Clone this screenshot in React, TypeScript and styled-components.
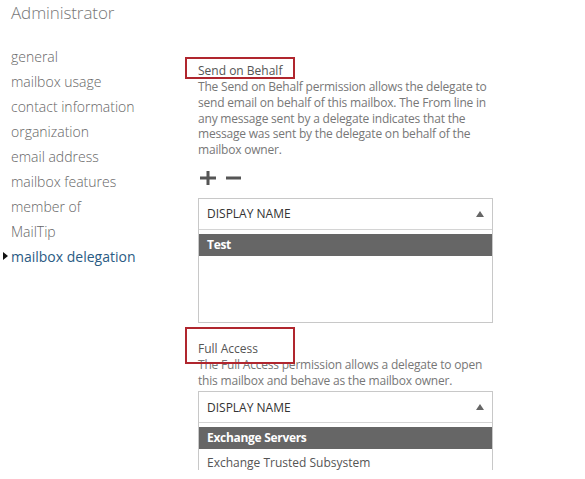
import React from "react";
import styled, { createGlobalStyle } from "styled-components";

const GlobalStyle = createGlobalStyle`
  html, body {
    margin: 0;
    padding: 0;
    background: #fff;
  }
  body {
    font-family: "Open Sans", "Noto Sans", sans-serif;
    color: #666;
  }
`;

const navItems = [
  "general",
  "mailbox usage",
  "contact information",
  "organization",
  "email address",
  "mailbox features",
  "member of",
  "MailTip",
  "mailbox delegation",
];

const Page = styled.div`
  width: 585px;
  height: 479px;
  overflow: hidden;
  position: relative;
`;

const Title = styled.h1`
  margin: 0;
  padding: 1px 0 0 11px;
  height: 34px;
  font-size: 17px;
  font-weight: 300;
  letter-spacing: -0.1px;
  color: #777;
  line-height: 24px;
`;

const Body = styled.div`
  display: flex;
`;

const Nav = styled.ul`
  list-style: none;
  margin: 9px 0 0 0;
  padding: 0;
  width: 198px;
  flex-shrink: 0;
`;

const NavItem = styled.li<{ $active?: boolean }>`
  position: relative;
  padding-left: 11px;
  height: 25px;
  line-height: 25px;
  font-size: 14px;
  font-weight: ${(p) => (p.$active ? 400 : 300)};
  color: ${(p) => (p.$active ? "#2a5b84" : "#666")};
  white-space: nowrap;

  ${(p) =>
    p.$active &&
    `
    &::before {
      content: "";
      position: absolute;
      left: 3px;
      top: 8px;
      border-style: solid;
      border-width: 4px 0 4px 5px;
      border-color: transparent transparent transparent #111;
    }
  `}
`;

const Content = styled.div`
  width: 295px;
  padding-top: 28px;
`;

const Section = styled.section<{ $gap: number }>`
  margin-top: ${(p) => p.$gap}px;
`;

const Heading = styled.h2`
  position: relative;
  margin: 0;
  font-size: 12px;
  font-weight: 400;
  color: #555;
  line-height: 16px;
`;

const Marker = styled.span<{ $top: number; $height: number }>`
  position: absolute;
  left: -13px;
  top: ${(p) => p.$top}px;
  width: 106px;
  height: ${(p) => p.$height}px;
  border: 2px solid #b0262e;
`;

const Description = styled.p`
  margin: 0;
  font-size: 12px;
  line-height: 15.75px;
  letter-spacing: -0.2px;
  color: #777;
`;

const Tools = styled.div`
  display: flex;
  gap: 10px;
  margin: 10px 0 0 2px;
  height: 14px;
  align-items: center;
`;

const ToolButton = styled.span`
  display: block;
  width: 16px;
  height: 14px;
`;

const ListBox = styled.div<{ $height: number; $top: number; $cut?: boolean }>`
  margin-top: ${(p) => p.$top}px;
  height: ${(p) => p.$height}px;
  border: 1px solid #c8c8c8;
  border-bottom: ${(p) => (p.$cut ? "none" : "1px solid #c8c8c8")};
  overflow: hidden;
  box-sizing: border-box;
`;

const Header = styled.div`
  display: flex;
  align-items: center;
  justify-content: space-between;
  height: 30px;
  padding: 0 8px 0 8px;
  border-bottom: 1px solid #d4d4d4;
  font-size: 12px;
  color: #333;
`;

const SortArrow = styled.span`
  width: 0;
  height: 0;
  border-style: solid;
  border-width: 0 4px 6px 4px;
  border-color: transparent transparent #666 transparent;
`;

const Row = styled.div<{ $selected?: boolean }>`
  height: ${(p) => (p.$selected ? 22 : 27)}px;
  line-height: ${(p) => (p.$selected ? 22 : 27)}px;
  padding-left: 8px;
  font-size: 12px;
  font-weight: ${(p) => (p.$selected ? 700 : 400)};
  letter-spacing: ${(p) => (p.$selected ? "-0.3px" : "0")};
  background: ${(p) => (p.$selected ? "#666" : "transparent")};
  color: ${(p) => (p.$selected ? "#fff" : "#555")};
`;

const Rows = styled.div`
  padding-top: 4px;
`;

const Plus = () => (
  <ToolButton>
    <svg width="16" height="14" viewBox="0 0 16 14">
      <rect x="0" y="5.5" width="16" height="3" fill="#555" />
      <rect x="6.5" y="0" width="3" height="14" fill="#555" />
    </svg>
  </ToolButton>
);

const Minus = () => (
  <ToolButton>
    <svg width="16" height="14" viewBox="0 0 16 14">
      <rect x="0" y="5.5" width="15" height="3" fill="#555" />
    </svg>
  </ToolButton>
);

export default function App() {
  return (
    <Page>
      <GlobalStyle />
      <Title>Administrator</Title>
      <Body>
        <Nav>
          {navItems.map((item) => (
            <NavItem key={item} $active={item === "mailbox delegation"}>
              {item}
            </NavItem>
          ))}
        </Nav>
        <Content>
          <Section $gap={0}>
            <Heading>
              Send on Behalf
              <Marker $top={-6} $height={18} />
            </Heading>
            <Description>
              The Send on Behalf permission allows the delegate to send email on
              behalf of this mailbox. The From line in any message sent by a
              delegate indicates that the message was sent by the delegate on
              behalf of the mailbox owner.
            </Description>
            <Tools>
              <Plus />
              <Minus />
            </Tools>
            <ListBox $height={125} $top={16}>
              <Header>
                DISPLAY NAME
                <SortArrow />
              </Header>
              <Rows>
                <Row $selected>Test</Row>
              </Rows>
            </ListBox>
          </Section>
          <Section $gap={18}>
            <Heading>
              Full Access
              <Marker $top={-14} $height={33} />
            </Heading>
            <Description>
              The Full Access permission allows a delegate to open this mailbox
              and behave as the mailbox owner.
            </Description>
            <ListBox $height={79} $top={3} $cut>
              <Header>
                DISPLAY NAME
                <SortArrow />
              </Header>
              <Rows>
                <Row $selected>Exchange Servers</Row>
                <Row>Exchange Trusted Subsystem</Row>
              </Rows>
            </ListBox>
          </Section>
        </Content>
      </Body>
    </Page>
  );
}
